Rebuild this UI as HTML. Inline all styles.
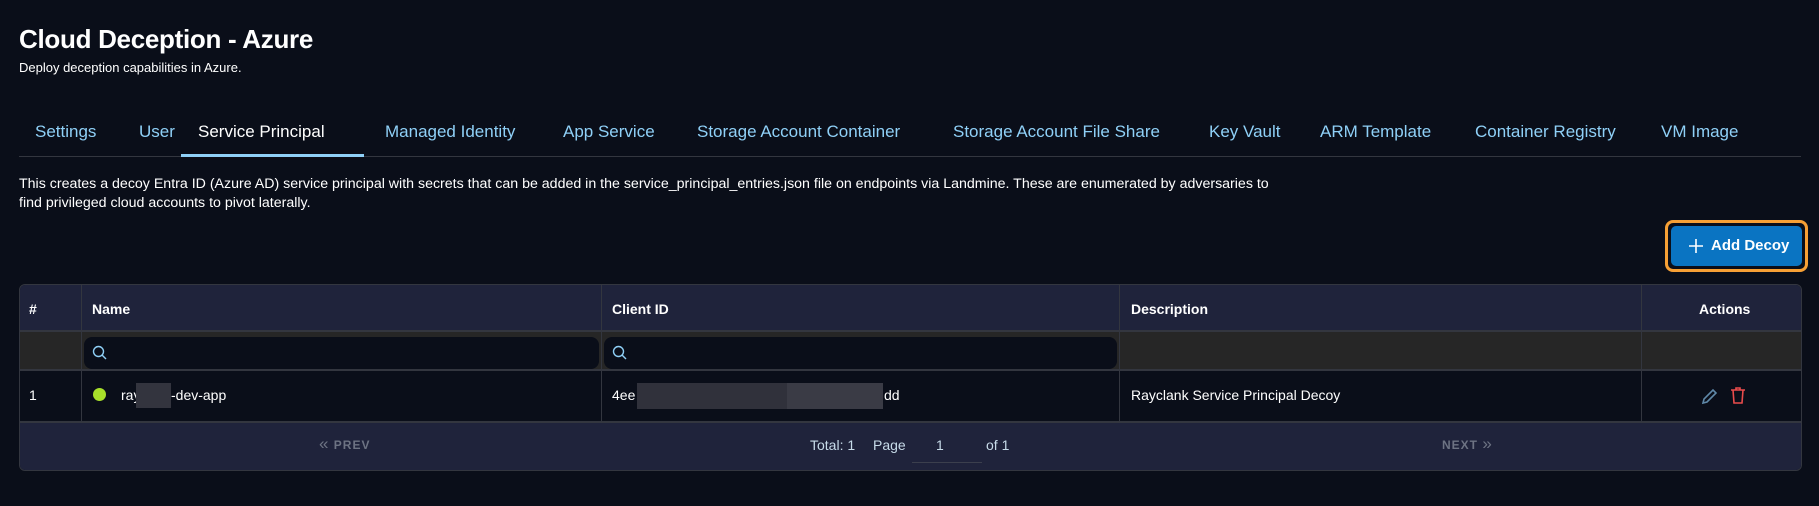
<!DOCTYPE html>
<html><head><meta charset="utf-8">
<style>
*{margin:0;padding:0;box-sizing:border-box}
body{width:1819px;height:506px;background:#0a0e19;font-family:"Liberation Sans",sans-serif;color:#fff;position:relative;overflow:hidden}
.a{position:absolute;white-space:nowrap}
.tab{position:absolute;top:122px;font-size:17px;color:#8fd0f7}
</style></head><body>
<div class="a" style="left:19px;top:24px;font-size:26px;font-weight:bold;letter-spacing:-0.3px">Cloud Deception - Azure</div>
<div class="a" style="left:19px;top:60px;font-size:13px">Deploy deception capabilities in Azure.</div>

<div class="tab" style="left:35px">Settings</div>
<div class="tab" style="left:139px">User</div>
<div class="tab" style="left:198px;color:#fff">Service Principal</div>
<div class="tab" style="left:385px">Managed Identity</div>
<div class="tab" style="left:563px">App Service</div>
<div class="tab" style="left:697px">Storage Account Container</div>
<div class="tab" style="left:953px">Storage Account File Share</div>
<div class="tab" style="left:1209px">Key Vault</div>
<div class="tab" style="left:1320px">ARM Template</div>
<div class="tab" style="left:1475px">Container Registry</div>
<div class="tab" style="left:1661px">VM Image</div>
<div class="a" style="left:19px;top:156px;width:1782px;height:1px;background:#33363f"></div>
<div class="a" style="left:181px;top:154px;width:183px;height:3px;background:#8fd0f7"></div>

<div class="a" style="left:19px;top:175px;font-size:14.2px;line-height:19px">This creates a decoy Entra ID (Azure AD) service principal with secrets that can be added in the service_principal_entries.json file on endpoints via Landmine. These are enumerated by adversaries to<br>find privileged cloud accounts to pivot laterally.</div>

<div class="a" style="left:1665px;top:220px;width:143px;height:52px;border:3px solid #f7a035;border-radius:8px"></div>
<div class="a" style="left:1671px;top:226px;width:131px;height:40px;background:#0a74c2;border-radius:5px;font-size:15px;font-weight:bold;line-height:40px;padding-left:40px">Add Decoy</div>
<svg class="a" style="left:1688px;top:238px" width="16" height="16"><path d="M8 1v14M1 8h14" stroke="#fff" stroke-width="1.6"/></svg>

<div class="a" style="left:19px;top:284px;width:1783px;height:187px;border:1px solid #33363f;border-radius:6px;overflow:hidden;background:#0a0e19">
 <div class="a" style="left:0;top:0;width:1783px;height:47px;background:#1f233b;border-bottom:2px solid #33363f"></div>
 <div class="a" style="left:0;top:47px;width:1783px;height:39px;background:#262626;border-bottom:2px solid #33363f"></div>
 <div class="a" style="left:0;top:136px;width:1783px;height:51px;background:#1f233b;border-top:2px solid #33363f"></div>
 <div class="a" style="left:61px;top:0;width:1px;height:136px;background:#33363f"></div>
 <div class="a" style="left:581px;top:0;width:1px;height:136px;background:#33363f"></div>
 <div class="a" style="left:1099px;top:0;width:1px;height:136px;background:#33363f"></div>
 <div class="a" style="left:1621px;top:0;width:1px;height:136px;background:#33363f"></div>
 <div class="a" style="left:9px;top:16px;font-size:14px;font-weight:bold">#</div>
 <div class="a" style="left:72px;top:16px;font-size:14px;font-weight:bold">Name</div>
 <div class="a" style="left:592px;top:16px;font-size:14px;font-weight:bold">Client ID</div>
 <div class="a" style="left:1111px;top:16px;font-size:14px;font-weight:bold">Description</div>
 <div class="a" style="left:1679px;top:16px;font-size:14px;font-weight:bold">Actions</div>
 <div class="a" style="left:64px;top:52px;width:515px;height:32px;background:#0a0e19;border-radius:8px"></div>
 <div class="a" style="left:584px;top:52px;width:513px;height:32px;background:#0a0e19;border-radius:8px"></div>
 <svg class="a" style="left:72px;top:60px" width="16" height="16"><circle cx="6.5" cy="6.5" r="5" fill="none" stroke="#8fd0f7" stroke-width="1.4"/><path d="M10 10l4 4" stroke="#8fd0f7" stroke-width="1.4"/></svg>
 <svg class="a" style="left:592px;top:60px" width="16" height="16"><circle cx="6.5" cy="6.5" r="5" fill="none" stroke="#8fd0f7" stroke-width="1.4"/><path d="M10 10l4 4" stroke="#8fd0f7" stroke-width="1.4"/></svg>
 <div class="a" style="left:9px;top:102px;font-size:14px">1</div>
 <div class="a" style="left:73px;top:103px;width:13px;height:13px;border-radius:50%;background:#a8e02a"></div>
 <div class="a" style="left:101px;top:102px;font-size:14px">ray</div>
 <div class="a" style="left:151px;top:102px;font-size:14px">-dev-app</div>
 <div class="a" style="left:116px;top:98px;width:35px;height:25px;background:#33343e"></div>
 <div class="a" style="left:592px;top:102px;font-size:14px">4ee</div>
 <div class="a" style="left:864px;top:102px;font-size:14px">dd</div>
 <div class="a" style="left:617px;top:98px;width:150px;height:26px;background:#30313b"></div>
 <div class="a" style="left:767px;top:98px;width:96px;height:26px;background:#3a3b45"></div>
 <div class="a" style="left:1111px;top:102px;font-size:14px">Rayclank Service Principal Decoy</div>
 <svg class="a" style="left:1680px;top:102px" width="18" height="18"><path d="M3 16l1-4L13 3l3 3-9 9z" fill="none" stroke="#5f88a8" stroke-width="1.6"/></svg>
 <svg class="a" style="left:1710px;top:101px" width="16" height="18"><path d="M1 4h14M6 4V2h4v2M3 4l1 13h8l1-13" fill="none" stroke="#ea4c4c" stroke-width="1.6"/></svg>
 <div class="a" style="left:299px;top:149px;font-size:12px;font-weight:bold;color:#6d7383;letter-spacing:1px"><span style="font-size:17px;font-weight:normal">«</span> PREV</div>
 <div class="a" style="left:790px;top:152px;font-size:14px;color:#c7dbe9">Total: 1</div>
 <div class="a" style="left:853px;top:152px;font-size:14px;color:#c7dbe9">Page</div>
 <div class="a" style="left:916px;top:152px;font-size:14px;color:#c7dbe9">1</div>
 <div class="a" style="left:892px;top:177px;width:70px;height:1px;background:#3b3f4d"></div>
 <div class="a" style="left:966px;top:152px;font-size:14px;color:#c7dbe9">of 1</div>
 <div class="a" style="left:1422px;top:149px;font-size:12px;font-weight:bold;color:#6d7383;letter-spacing:1px">NEXT <span style="font-size:17px;font-weight:normal">»</span></div>
</div>
</body></html>
